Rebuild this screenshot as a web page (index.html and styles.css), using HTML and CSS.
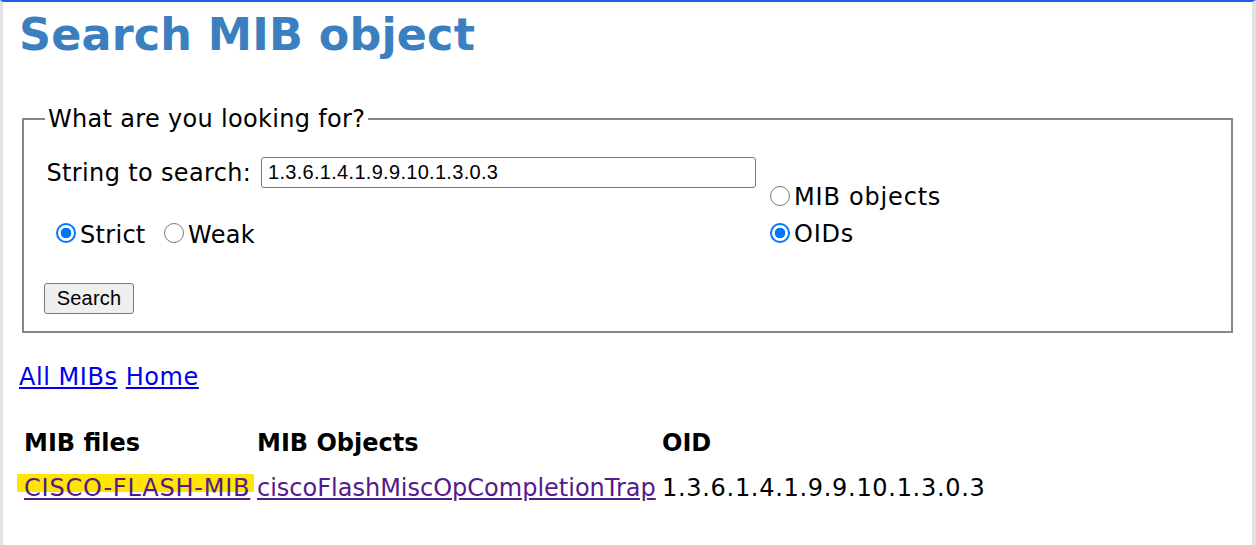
FILE: index.html
```html
<!DOCTYPE html>
<html lang="en">
<head>
<meta charset="utf-8">
<title>Search MIB object</title>
<link rel="stylesheet" href="styles.css">
</head>
<body>
<div class="frame">
  <h1 class="title">Search MIB object</h1>
  <form class="search-form">
    <fieldset class="search-box">
      <legend class="search-legend">What are you looking for?</legend>
      <div class="search-grid">
        <div class="left-col">
          <div class="row row-string">
            <span class="field-label">String to search:</span>
            <input class="query" type="text" value="1.3.6.1.4.1.9.9.10.1.3.0.3">
          </div>
          <div class="row row-mode">
            <label class="radio-label"><input class="radio" type="radio" name="mode" checked>Strict</label>
            <label class="radio-label"><input class="radio" type="radio" name="mode">Weak</label>
          </div>
        </div>
        <div class="right-col">
          <label class="radio-label wide"><input class="radio" type="radio" name="kind">MIB objects</label>
          <label class="radio-label wide"><input class="radio" type="radio" name="kind" checked>OIDs</label>
        </div>
      </div>
      <button class="search-btn" type="button">Search</button>
    </fieldset>
  </form>
  <div class="nav-links">
    <a class="link" href="#">All MIBs</a> <a class="link" href="#">Home</a>
  </div>
  <table class="results">
    <thead>
      <tr>
        <th class="c1">MIB files</th>
        <th class="c2">MIB Objects</th>
        <th class="c3">OID</th>
      </tr>
    </thead>
    <tbody>
      <tr>
        <td class="c1 hl"><a class="link visited mib-file" href="#">CISCO-FLASH-MIB</a></td>
        <td class="c2"><a class="link visited" href="#">ciscoFlashMiscOpCompletionTrap</a></td>
        <td class="c3 oid">1.3.6.1.4.1.9.9.10.1.3.0.3</td>
      </tr>
    </tbody>
  </table>
</div>
</body>
</html>
```
FILE: styles.css
```css
html, body {
  margin: 0;
  padding: 0;
  background: #ffffff;
}

body {
  font-family: "DejaVu Sans", Verdana, sans-serif;
  font-size: 24px;
  color: #000000;
}

.frame {
  box-sizing: border-box;
  min-height: 545px;
  border-top: 2px solid #1b5fe3;
  border-left: 3px solid #e2e2e2;
  border-right: 4px solid #e2e2e2;
  padding: 0 16px 0 16px;
}

.title {
  margin: 7px 0 44px 0;
  font-family: "DejaVu Sans", Verdana, sans-serif;
  font-weight: bold;
  font-size: 44.5px;
  line-height: 52px;
  letter-spacing: 0.15px;
  color: #3a80c0;
  height: 52px;
}

.search-form {
  margin: 0;
}

.search-box {
  margin: 0 3px;
  padding: 24px 18px 17px 20px;
  border: 2px solid #878787;
  min-width: 0;
}

.search-legend {
  padding: 0 3px;
  margin-left: 1px;
  line-height: 28px;
  font-size: 24px;
  letter-spacing: 0.32px;
}

.search-grid {
  display: grid;
  grid-template-columns: 716.5px auto;
}

.left-col {
  display: flex;
  flex-direction: column;
}

.row {
  display: flex;
  align-items: center;
  padding-left: 2.5px;
  line-height: 30px;
}

.row-string {
  height: 31px;
}

.field-label {
  display: inline-block;
  width: 214.5px;
  letter-spacing: 0.35px;
}

.query {
  box-sizing: border-box;
  width: 495px;
  height: 31px;
  margin: 0;
  padding: 0 6px;
  border: 1.5px solid #7a7a7a;
  border-radius: 3px;
  font-family: "Liberation Sans", Arial, sans-serif;
  font-size: 20px;
  letter-spacing: 0.3px;
  color: #000000;
  background: #ffffff;
}

.row-mode {
  height: 31px;
  margin-top: 31px;
  gap: 9px;
}

.radio-label {
  display: flex;
  align-items: center;
  line-height: 30px;
  height: 30px;
  letter-spacing: 0.3px;
}

.radio-label.wide {
  letter-spacing: 0.8px;
}

.radio {
  -webkit-appearance: none;
  appearance: none;
  box-sizing: border-box;
  width: 20px;
  height: 20px;
  margin: 0 4px 3px 9.5px;
  border: 1.5px solid #7a7a7a;
  border-radius: 50%;
  background: #ffffff;
  flex: none;
}

.radio:checked {
  border: 2px solid #0075ff;
  background: radial-gradient(circle, #0075ff 0 5px, #ffffff 5.6px);
}

.right-col {
  display: flex;
  flex-direction: column;
  gap: 7px;
  padding-top: 25px;
}

.search-btn {
  display: block;
  box-sizing: border-box;
  width: 90px;
  height: 31px;
  margin-top: 33px;
  padding: 0;
  border: 1.5px solid #7a7a7a;
  border-radius: 3px;
  background: #efefef;
  font-family: "Liberation Sans", Arial, sans-serif;
  font-size: 20px;
  letter-spacing: 0.2px;
  color: #000000;
}

.nav-links {
  margin-top: 29px;
  line-height: 30px;
  height: 30px;
  letter-spacing: 0.55px;
}

.link {
  color: #0000ee;
  text-decoration: underline;
}

.link.visited {
  color: #551a8b;
}

.results {
  margin-top: 36px;
  margin-left: -2px;
  border-collapse: separate;
  border-spacing: 0;
  table-layout: fixed;
  width: 980px;
}

.results th,
.results td {
  text-align: left;
  vertical-align: top;
  padding: 0;
  line-height: 30px;
  white-space: nowrap;
}

.results th {
  font-weight: bold;
  padding-bottom: 15px;
}

.results .c1 {
  width: 232px;
  padding-left: 7px;
}

.results .c2 {
  width: 403px;
  padding-left: 1px;
}

.results .c3 {
  padding-left: 2px;
}

.mib-file {
  letter-spacing: 0.8px;
}

.oid {
  letter-spacing: 0.7px;
}

.results td.hl {
  background-image: linear-gradient(to bottom, transparent 0, transparent 1px, #ffe500 1px, #ffe500 19px, transparent 19px);
  background-size: 237px 100%;
  background-repeat: no-repeat;
  background-position: 0 0;
}
```
